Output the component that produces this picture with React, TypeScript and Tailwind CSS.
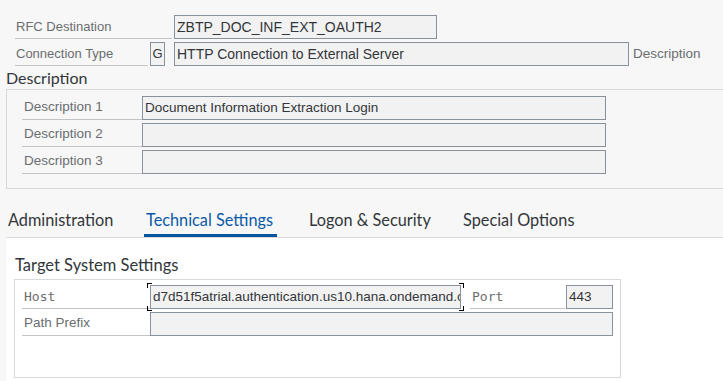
import React from "react";

const LBL =
  "h-[24px] shrink-0 border-b border-[#c4c4c4] flex items-center text-[#6a6d70] whitespace-nowrap";
const INP =
  "h-[24px] shrink-0 border border-[#89919a] bg-[#f2f2f2] flex items-center text-[#32363a] whitespace-nowrap overflow-hidden";

function Corner({ pos }: { pos: "tl" | "tr" | "bl" | "br" }) {
  const cls =
    pos === "tl"
      ? "absolute left-[-3px] top-[-2px] w-[5px] h-[5px] border-t-[1.5px] border-l-[1.5px] border-black"
      : pos === "tr"
      ? "absolute right-[-3px] top-[-2px] w-[5px] h-[5px] border-t-[1.5px] border-r-[1.5px] border-black"
      : pos === "bl"
      ? "absolute left-[-3px] bottom-[-2px] w-[5px] h-[5px] border-b-[1.5px] border-l-[1.5px] border-black"
      : "absolute right-[-3px] bottom-[-2px] w-[5px] h-[5px] border-b-[1.5px] border-r-[1.5px] border-black";
  return <span className={cls} />;
}

export default function App() {
  return (
    <div className="w-[723px] h-[381px] overflow-hidden bg-[#f7f7f7] font-['Liberation_Sans',Arial,sans-serif] flex flex-col">
      {/* Header fields */}
      <div className="pl-[15px] pt-[15px] flex flex-col gap-[3px]">
        <div className="flex items-end">
          <div className={LBL + " w-[157px] pl-[1px] text-[13px]"}>RFC Destination</div>
          <div className={INP + " ml-[2px] w-[263px] pl-[2px] text-[14px]"}>ZBTP_DOC_INF_EXT_OAUTH2</div>
        </div>
        <div className="flex items-end">
          <div className={LBL + " w-[133px] pl-[1px] text-[13px]"}>Connection Type</div>
          <div className={INP + " ml-[2px] w-[15px] justify-center text-[13px]"}>G</div>
          <div className={INP + " ml-[9px] w-[455px] pl-[2px] text-[14px]"}>HTTP Connection to External Server</div>
          <div className="h-[24px] ml-[4px] flex items-center text-[13.5px] text-[#6a6d70] whitespace-nowrap">Description</div>
        </div>
      </div>

      {/* Description heading */}
      <div className="mt-[2px] mb-[1px] h-[20px] leading-[20px] pl-[6px] text-[16px] text-[#32363a] font-['Lato',sans-serif]">
        Description
      </div>

      {/* Description group */}
      <div className="ml-[6px] w-[730px] h-[100px] shrink-0 border border-[#d9d9d9] pt-[6px] pl-[15px] flex flex-col gap-[3px]">
        {["Description 1", "Description 2", "Description 3"].map((l, i) => (
          <div key={l} className="flex items-end">
            <div className={LBL + " w-[120px] pl-[2px] text-[13.5px]"}>{l}</div>
            <div className={INP + " w-[464px] pl-[2px] text-[13.5px]"}>
              {i === 0 ? "Document Information Extraction Login" : ""}
            </div>
          </div>
        ))}
      </div>

      {/* Tabs */}
      <div className="ml-[6px] h-[49px] shrink-0 border-b border-[#d9d9d9] flex items-end font-['Lato',sans-serif] text-[16.3px]">
        <div className="w-[106px] flex flex-col">
          <div className="px-[2px] leading-[20px] text-[#32363a] whitespace-nowrap">Administration</div>
          <div className="mt-[4px] h-[3px]" />
        </div>
        <div className="ml-[32px] w-[133px] flex flex-col">
          <div className="px-[2px] leading-[20px] text-[#0a5aa8] whitespace-nowrap">Technical Settings</div>
          <div className="mt-[4px] h-[3px] bg-[#0854a0]" />
        </div>
        <div className="ml-[30px] w-[125px] flex flex-col">
          <div className="px-[2px] leading-[20px] text-[#32363a] whitespace-nowrap">Logon &amp; Security</div>
          <div className="mt-[4px] h-[3px]" />
        </div>
        <div className="ml-[29px] w-[115px] flex flex-col">
          <div className="px-[2px] leading-[20px] text-[#32363a] whitespace-nowrap">Special Options</div>
          <div className="mt-[4px] h-[3px]" />
        </div>
      </div>

      {/* Tab content */}
      <div className="ml-[6px] flex-1 bg-white pt-[18px] flex flex-col">
        <div className="pl-[9px] h-[18px] leading-[18px] text-[16.5px] text-[#32363a] font-['Lato',sans-serif] whitespace-nowrap">
          Target System Settings
        </div>
        <div className="mt-[5px] ml-[8px] w-[607px] h-[99px] border border-[#d9d9d9] pt-[5px] pl-[7px] flex flex-col gap-[3px]">
          <div className="flex items-end">
            <div className={LBL + " w-[128px] pl-[2px] text-[13px] font-['DejaVu_Sans_Mono',monospace]"}>Host</div>
            <div className="relative shrink-0">
              <div className={INP + " w-[311px] pl-[2px] text-[13.5px]"}>
                d7d51f5atrial.authentication.us10.hana.ondemand.com
              </div>
              <Corner pos="tl" />
              <Corner pos="tr" />
              <Corner pos="bl" />
              <Corner pos="br" />
            </div>
            <div className={LBL + " ml-[9px] w-[95px] pl-[2px] text-[13px] font-['DejaVu_Sans_Mono',monospace]"}>Port</div>
            <div className={INP + " ml-[1px] w-[47px] pl-[2px] text-[13.5px]"}>443</div>
          </div>
          <div className="flex items-end">
            <div className={LBL + " w-[128px] pl-[2px] text-[13.5px]"}>Path Prefix</div>
            <div className={INP + " w-[463px]"} />
          </div>
        </div>
      </div>
    </div>
  );
}
